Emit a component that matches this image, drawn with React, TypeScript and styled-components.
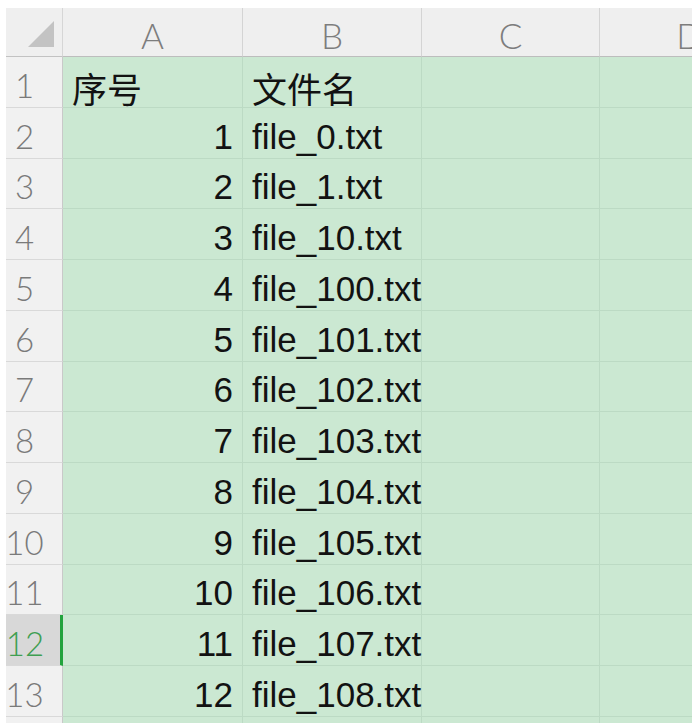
import React from "react";
import styled, { createGlobalStyle, css } from "styled-components";

const GlobalStyle = createGlobalStyle`
  html, body {
    margin: 0;
    padding: 0;
    background: #ffffff;
    overflow: hidden;
  }
`;

const Page = styled.div`
  box-sizing: border-box;
  width: 696px;
  height: 723px;
  padding: 8px 0 0 6px;
  background: #ffffff;
  overflow: hidden;
`;

const Sheet = styled.div`
  width: 686px;
  height: 715px;
  overflow: hidden;
  display: flex;
  flex-direction: column;
`;

const Row = styled.div<{ $h: number }>`
  display: flex;
  flex: 0 0 auto;
  height: ${(p) => p.$h}px;
`;

const COLS = [180, 179, 178, 180];

const Corner = styled.div`
  box-sizing: border-box;
  flex: 0 0 57px;
  min-width: 0;
  background: #efefef;
  border-right: 1px solid #d6d6d6;
  border-bottom: 1px solid #c2c2c2;
  display: flex;
  align-items: flex-end;
  justify-content: flex-end;
  padding: 0 8px 9px 0;
`;

const ColHeader = styled.div<{ $w: number }>`
  box-sizing: border-box;
  flex: 0 0 ${(p) => p.$w}px;
  width: ${(p) => p.$w}px;
  min-width: 0;
  background: #efefef;
  border-right: 1px solid #d4d4d4;
  border-bottom: 1px solid #bdbdbd;
  display: flex;
  align-items: flex-end;
  justify-content: center;
  padding-bottom: 3px;
  font-family: Lato, "Liberation Sans", sans-serif;
  font-weight: 300;
  font-size: 35px;
  line-height: 1;
  color: #7d7d7d;
`;

const RowHeader = styled.div<{ $selected?: boolean }>`
  box-sizing: border-box;
  flex: 0 0 57px;
  min-width: 0;
  background: #f1f1f1;
  border-right: 1px solid #c9c9c9;
  border-bottom: 1px solid #d9d9d9;
  display: flex;
  align-items: flex-end;
  justify-content: center;
  padding: 0 19px 5px 0;
  overflow: hidden;
  font-family: Lato, "Liberation Sans", sans-serif;
  font-weight: 300;
  font-size: 33px;
  line-height: 1;
  color: #7a7a7a;
  ${(p) =>
    p.$selected &&
    css`
      background: #d8d8d8;
      color: #3f9f52;
      border-right: 3px solid #22a33d;
      padding-right: 16px;
    `}
`;

const Cell = styled.div<{ $w: number; $align?: "left" | "right" }>`
  box-sizing: border-box;
  flex: 0 0 ${(p) => p.$w}px;
  width: ${(p) => p.$w}px;
  min-width: 0;
  background: #cbe8d2;
  border-right: 1px solid #bcdac4;
  border-bottom: 1px solid #bcdac4;
  display: flex;
  align-items: flex-end;
  justify-content: ${(p) => (p.$align === "right" ? "flex-end" : "flex-start")};
  padding: 0 9px 4px 9px;
  white-space: nowrap;
  overflow: visible;
  font-family: "Liberation Sans", "Noto Sans CJK SC", sans-serif;
  font-size: 35px;
  line-height: 1;
  color: #121212;
`;

const CjkText = styled.span`
  font-family: "Noto Sans CJK SC", sans-serif;
  font-size: 35px;
  line-height: 1;
  position: relative;
  top: 2px;
`;

const Triangle = () => (
  <svg width="26" height="26" viewBox="0 0 26 26">
    <polygon points="26,0 26,26 0,26" fill="#c3c3c3" />
  </svg>
);

const names = [
  "file_0.txt",
  "file_1.txt",
  "file_10.txt",
  "file_100.txt",
  "file_101.txt",
  "file_102.txt",
  "file_103.txt",
  "file_104.txt",
  "file_105.txt",
  "file_106.txt",
  "file_107.txt",
  "file_108.txt",
];

const ROW_H = 50.77;
const rowHeight = (i: number) =>
  Math.round(57 + (i + 1) * ROW_H) - Math.round(57 + i * ROW_H);

export default function App() {
  return (
    <>
      <GlobalStyle />
      <Page>
        <Sheet>
          <Row $h={49}>
            <Corner>
              <Triangle />
            </Corner>
            {["A", "B", "C", "D"].map((l, i) => (
              <ColHeader key={l} $w={COLS[i]}>
                {l}
              </ColHeader>
            ))}
          </Row>
          <Row $h={rowHeight(0)}>
            <RowHeader>1</RowHeader>
            <Cell $w={COLS[0]}>
              <CjkText>序号</CjkText>
            </Cell>
            <Cell $w={COLS[1]}>
              <CjkText>文件名</CjkText>
            </Cell>
            <Cell $w={COLS[2]} />
            <Cell $w={COLS[3]} />
          </Row>
          {names.map((n, i) => (
            <Row key={n} $h={rowHeight(i + 1)}>
              <RowHeader $selected={i + 2 === 12}>{i + 2}</RowHeader>
              <Cell $w={COLS[0]} $align="right">
                {i + 1}
              </Cell>
              <Cell $w={COLS[1]}>{n}</Cell>
              <Cell $w={COLS[2]} />
              <Cell $w={COLS[3]} />
            </Row>
          ))}
          <Row $h={51}>
            <RowHeader />
            <Cell $w={COLS[0]} />
            <Cell $w={COLS[1]} />
            <Cell $w={COLS[2]} />
            <Cell $w={COLS[3]} />
          </Row>
        </Sheet>
      </Page>
    </>
  );
}
